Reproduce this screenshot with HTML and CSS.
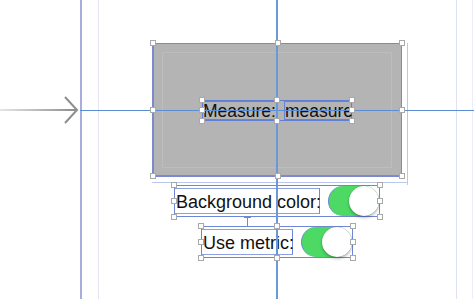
FILE: index.html
```html
<!DOCTYPE html>
<html lang="en">
<head>
    <meta charset="UTF-8">
    <title>Canvas</title>
    <link rel="stylesheet" href="styles.css">
</head>
<body>

<div class="canvas">
    <!-- guides behind content -->
    <div class="guide guide-left"></div>
    <div class="guide guide-left-soft"></div>
    <div class="guide guide-right-soft"></div>
    <div class="guide guide-edge"></div>

    <div class="entry-arrow">
        <svg width="80" height="30" viewBox="0 0 80 30">
            <defs>
                <linearGradient id="fade" gradientUnits="userSpaceOnUse" x1="0" y1="15" x2="78" y2="15">
                    <stop offset="0" stop-color="#e6e6e6"/>
                    <stop offset="1" stop-color="#8a8a8a"/>
                </linearGradient>
            </defs>
            <rect x="0" y="14" width="77" height="2" fill="url(#fade)"/>
            <polyline points="65,2 77,15 65,28" fill="none" stroke="#8e8e8e" stroke-width="2"/>
        </svg>
    </div>

    <div class="stack">
        <div class="view sel">
            <div class="view-inner">
                <div class="measure sel">
                    <span class="cell">Measure:</span>
                    <span class="cell cell-value">measure</span>
                    <i class="h tl"></i><i class="h tc"></i><i class="h tr"></i>
                    <i class="h ml"></i><i class="h mr"></i>
                    <i class="h bl"></i><i class="h bc"></i><i class="h br"></i>
                </div>
            </div>
            <i class="h tl"></i><i class="h tc"></i><i class="h tr"></i>
            <i class="h ml"></i><i class="h mr"></i>
            <i class="h bl"></i><i class="h bc"></i><i class="h br"></i>
            <div class="dim dim-bottom"></div>
            <div class="dim dim-right"></div>
        </div>

        <div class="row row-bg sel">
            <span class="row-label">Background color:</span>
            <span class="switch"><span class="knob"></span></span>
            <i class="h tl"></i><i class="h tr"></i>
            <i class="h ml"></i><i class="h mr"></i>
            <i class="h bl"></i><i class="h br"></i>
        </div>

        <div class="link"></div>

        <div class="row row-metric sel">
            <span class="row-label">Use metric:</span>
            <span class="switch"><span class="knob"></span></span>
            <i class="h tl"></i><i class="h tc"></i><i class="h tr"></i>
            <i class="h ml"></i><i class="h mr"></i>
            <i class="h bl"></i><i class="h bc"></i><i class="h br"></i>
        </div>
    </div>

    <!-- centre guides over content -->
    <div class="guide-h"></div>
    <div class="guide-v"></div>
</div>

</body>
</html>
```

FILE: styles.css
```css
body {
    margin: 0;
    background: #ffffff;
    font-family: "Liberation Sans", Arial, sans-serif;
    color: #111;
}
.canvas {
    position: relative;
    width: 474px;
    height: 299px;
    overflow: hidden;
}

/* guide lines */
.guide {
    position: absolute;
    top: 0;
    bottom: 0;
    width: 1px;
}
.guide-left {
    left: 80px;
    width: 2px;
    background: #a7aedc;
}
.guide-left-soft {
    left: 98px;
    background: #e4e6f5;
}
.guide-right-soft {
    left: 456px;
    background: #dfe2f4;
}
.guide-edge {
    left: 472px;
    background: #eceef8;
}
.guide-h {
    position: absolute;
    left: 80px;
    right: 0;
    top: 110px;
    height: 1px;
    background: #5b8cd4;
}
.guide-v {
    position: absolute;
    left: 276px;
    top: 0;
    bottom: 0;
    width: 2px;
    background: #6b98d8;
}
.entry-arrow {
    position: absolute;
    left: 0;
    top: 95px;
    height: 30px;
}
.entry-arrow svg {
    display: block;
}

/* content stack */
.stack {
    padding: 43px 0 0 152px;
    width: 250px;
    display: flex;
    flex-direction: column;
    align-items: center;
}
.sel {
    position: relative;
}
.view {
    box-sizing: border-box;
    width: 250px;
    height: 134px;
    padding: 8px 9px 9px 7px;
    background: #b4b4b4;
    border: 2px solid #7e88cf;
    border-top-width: 1px;
    border-right-width: 1px;
}
.view-inner {
    height: 100%;
    border: 1px solid #bdbdbd;
    display: flex;
    align-items: center;
    justify-content: center;
    margin-left: 1px;
}
.measure {
    display: flex;
    gap: 7px;
    border: 1px solid #5f7fd6;
}
.cell {
    box-sizing: border-box;
    height: 19px;
    line-height: 18px;
    font-size: 17.5px;
    border: 1px solid #6783d8;
    white-space: nowrap;
}
.cell:first-child {
    width: 74px;
    border-left: none;
}
.cell-value {
    width: 67px;
    border-right: none;
}

/* dimension markers */
.dim {
    position: absolute;
    background: #b9c8ec;
}
.dim-bottom {
    left: -2px;
    width: 256px;
    bottom: -8px;
    height: 1px;
}
.dim-right {
    right: -7px;
    top: -1px;
    width: 1px;
    height: 142px;
}

/* rows */
.row {
    box-sizing: border-box;
    display: flex;
    align-items: center;
    height: 32px;
    border: 1px solid #6f86d6;
    font-size: 18px;
}
.row-bg {
    width: 206px;
    margin-top: 8px;
}
.row-metric {
    width: 152px;
}
.row-label {
    box-sizing: border-box;
    height: 26px;
    line-height: 26px;
    border-top: 1px solid #8ea0e0;
    border-bottom: 1px solid #8ea0e0;
    border-right: 1px solid #6f86d6;
    padding-left: 1px;
    white-space: nowrap;
}
.row-bg .row-label {
    width: 145px;
    margin-right: 8px;
}
.row-metric .row-label {
    width: 91px;
    margin-right: 8px;
}
.switch {
    position: relative;
    box-sizing: border-box;
    width: 51px;
    height: 30px;
    border-radius: 15px;
    background: #4cd964;
    border-left: 1px solid #6f86d6;
}
.knob {
    position: absolute;
    right: 0;
    top: 0;
    width: 30px;
    height: 30px;
    border-radius: 50%;
    background: #fff;
    box-shadow: 0 2px 3px rgba(0, 0, 0, 0.25), 0 0 0 0.5px rgba(0, 0, 0, 0.1);
}
.link {
    width: 1px;
    height: 9px;
    background: #6f86d6;
    margin-left: -60px;
    position: relative;
}
.link::before {
    content: "";
    position: absolute;
    left: -3px;
    top: 0;
    width: 7px;
    height: 1px;
    background: #6f86d6;
}

/* handles */
.h {
    position: absolute;
    box-sizing: border-box;
    width: 6px;
    height: 6px;
    background: #fff;
    border: 1px solid #a9a9a9;
    z-index: 2;
}
.tl { left: -4px; top: -4px; }
.tc { left: calc(50% - 3px); top: -4px; }
.tr { right: -4px; top: -4px; }
.ml { left: -4px; top: calc(50% - 3px); }
.mr { right: -4px; top: calc(50% - 3px); }
.bl { left: -4px; bottom: -4px; }
.bc { left: calc(50% - 3px); bottom: -4px; }
.br { right: -4px; bottom: -4px; }
```
